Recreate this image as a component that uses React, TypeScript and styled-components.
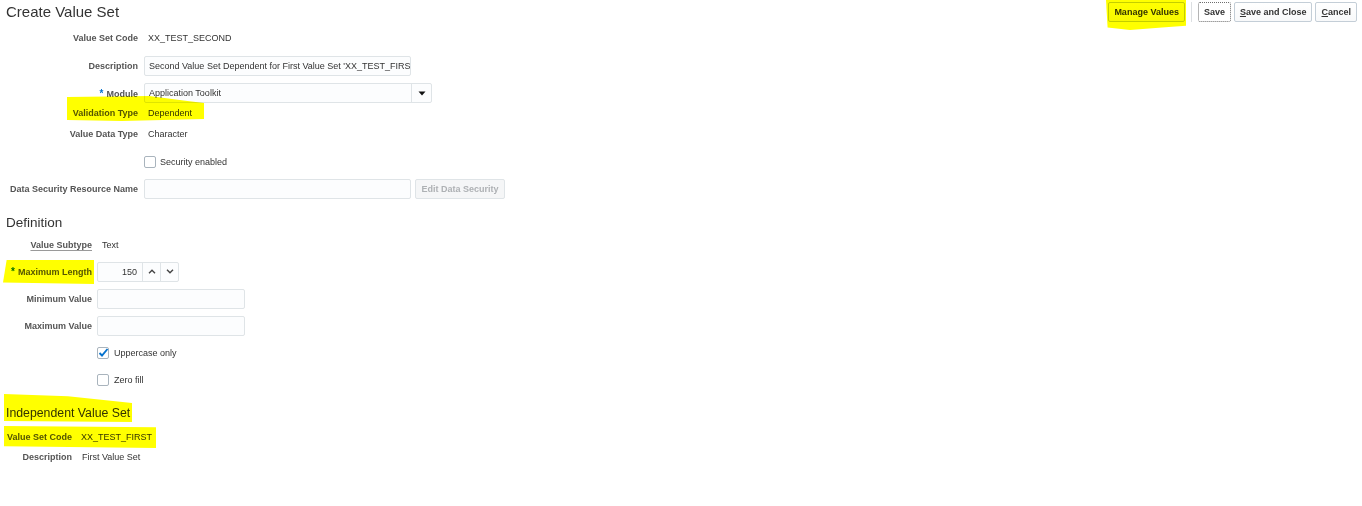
import React from "react";
import styled, { createGlobalStyle, css } from "styled-components";

const Global = createGlobalStyle`
  html, body { margin: 0; padding: 0; background: #ffffff; }
  body { font-family: "Liberation Sans", Arial, sans-serif; color: #333333; }
  * { box-sizing: border-box; }
`;

const Page = styled.div`
  position: relative;
  width: 1362px;
  min-height: 506px;
  padding-left: 6px;
  font-size: 9px;
`;

const Header = styled.div`
  display: flex;
  justify-content: space-between;
  align-items: flex-start;
  height: 25px;
  padding-right: 5px;
`;

const Title = styled.h1`
  margin: 0;
  font-size: 15px;
  line-height: 24px;
  font-weight: normal;
  color: #333333;
`;

const SectionTitle = styled.h2<{ $mt: number; $size: number }>`
  margin: ${(p) => p.$mt}px 0 0 0;
  height: 20px;
  font-size: ${(p) => p.$size}px;
  line-height: 20px;
  font-weight: normal;
  color: #333333;
`;

const Toolbar = styled.div`
  display: flex;
  align-items: center;
  gap: 3px;
  padding-top: 2px;
`;

const Button = styled.button<{ $focused?: boolean }>`
  height: 20px;
  padding: 0 5px;
  border: 1px solid #c4ced7;
  border-radius: 2px;
  background: linear-gradient(#ffffff, #f8f9fa);
  font-family: "Liberation Sans", Arial, sans-serif;
  font-size: 9px;
  font-weight: bold;
  color: #333333;
  cursor: pointer;
  ${(p) =>
    p.$focused &&
    css`
      border: 1px dotted #6d6d6d;
      background: #ffffff;
    `}
  u { text-decoration: underline; }
`;

const Separator = styled.div`
  width: 1px;
  height: 20px;
  background: #dcdfe2;
  margin: 0 3px;
`;

const Form = styled.div`
  display: flex;
  flex-direction: column;
`;

const Row = styled.div<{ $col: number; $gap: number; $h: number; $mt?: number }>`
  display: grid;
  grid-template-columns: ${(p) => p.$col}px auto;
  column-gap: ${(p) => p.$gap}px;
  align-items: center;
  justify-items: start;
  height: ${(p) => p.$h}px;
  margin-top: ${(p) => p.$mt ?? 0}px;
`;

const Label = styled.label<{ $underline?: boolean }>`
  justify-self: end;
  font-weight: bold;
  color: #555555;
  white-space: nowrap;
  ${(p) =>
    p.$underline &&
    css`
      text-decoration: underline;
      text-decoration-color: #9a9a9a;
      text-underline-offset: 2px;
    `}
`;

const Required = styled.span`
  color: #0572ce;
  font-size: 10px;
  margin-right: 3px;
`;

const Value = styled.span<{ $pad: number }>`
  padding-left: ${(p) => p.$pad}px;
  color: #333333;
  white-space: nowrap;
`;

const TextInput = styled.div<{ $w: number }>`
  width: ${(p) => p.$w}px;
  height: 20px;
  border: 1px solid #dfe4e7;
  border-radius: 2px;
  background: #fcfdfe;
  padding: 0 4px;
  display: flex;
  align-items: center;
  color: #333333;
  white-space: nowrap;
  overflow: hidden;
`;

const Controls = styled.div`
  display: flex;
  align-items: center;
  gap: 4px;
`;

const Select = styled.div`
  width: 288px;
  height: 20px;
  border: 1px solid #dfe4e7;
  border-radius: 2px;
  background: #fcfdfe;
  display: flex;
  align-items: stretch;
`;

const SelectText = styled.span`
  flex: 1;
  padding: 0 4px;
  display: flex;
  align-items: center;
  color: #333333;
`;

const SelectButton = styled.span`
  width: 20px;
  border-left: 1px solid #dfe4e7;
  display: flex;
  align-items: center;
  justify-content: center;
`;

const DisabledButton = styled.span`
  height: 20px;
  width: 90px;
  border: 1px solid #dfe4e7;
  border-radius: 2px;
  background: #f5f6f7;
  color: #aeb1b4;
  font-weight: bold;
  display: flex;
  align-items: center;
  justify-content: center;
`;

const Spin = styled.div`
  display: flex;
  height: 20px;
  border: 1px solid #dfe4e7;
  border-radius: 2px;
  background: #fcfdfe;
`;

const SpinValue = styled.span`
  width: 44px;
  padding-right: 5px;
  display: flex;
  align-items: center;
  justify-content: flex-end;
  color: #333333;
`;

const SpinButton = styled.span`
  width: 18px;
  border-left: 1px solid #dfe4e7;
  display: flex;
  align-items: center;
  justify-content: center;
`;

const Check = styled.label<{ $gap: number }>`
  display: flex;
  align-items: center;
  gap: ${(p) => p.$gap}px;
  color: #333333;
`;

const Box = styled.span`
  width: 12px;
  height: 12px;
  border: 1px solid #a9b4bd;
  border-radius: 2px;
  background: #ffffff;
  position: relative;
`;

const Tick = styled.svg`
  position: absolute;
  left: 0px;
  top: 0px;
`;

const Marker = styled.div<{ $x: number; $y: number; $w: number; $h: number; $clip: string }>`
  position: absolute;
  left: ${(p) => p.$x}px;
  top: ${(p) => p.$y}px;
  width: ${(p) => p.$w}px;
  height: ${(p) => p.$h}px;
  background: #ffff00;
  mix-blend-mode: multiply;
  pointer-events: none;
  clip-path: ${(p) => p.$clip};
`;

const Checkbox = ({ checked }: { checked?: boolean }) => (
  <Box>
    {checked && (
      <Tick width="11" height="10" viewBox="0 0 11 10">
        <polyline points="1.5,5 4,7.5 9.5,1" fill="none" stroke="#0572ce" strokeWidth="1.9" />
      </Tick>
    )}
  </Box>
);

const Chevron = ({ up }: { up?: boolean }) => (
  <svg width="8" height="5" viewBox="0 0 8 5">
    <polyline
      points={up ? "1,4.3 4,1.3 7,4.3" : "1,0.8 4,3.8 7,0.8"}
      fill="none"
      stroke="#444"
      strokeWidth="1.4"
    />
  </svg>
);

export default function App() {
  return (
    <>
      <Global />
      <Page>
        <Header>
          <Title>Create Value Set</Title>
          <Toolbar>
            <Button>Manage Values</Button>
            <Separator />
            <Button $focused>Save</Button>
            <Button>
              <u>S</u>ave and Close
            </Button>
            <Button>
              <u>C</u>ancel
            </Button>
          </Toolbar>
        </Header>

        <Form>
          <Row $col={132} $gap={6} $h={26}>
            <Label>Value Set Code</Label>
            <Value $pad={4}>XX_TEST_SECOND</Value>
          </Row>
          <Row $col={132} $gap={6} $h={30}>
            <Label>Description</Label>
            <TextInput $w={267}>Second Value Set Dependent for First Value Set 'XX_TEST_FIRST'</TextInput>
          </Row>
          <Row $col={132} $gap={6} $h={24}>
            <Label>
              <Required>*</Required>Module
            </Label>
            <Select>
              <SelectText>Application Toolkit</SelectText>
              <SelectButton>
                <svg width="8" height="5" viewBox="0 0 8 5">
                  <polygon points="0.5,0.5 7.5,0.5 4,4.5" fill="#111" />
                </svg>
              </SelectButton>
            </Select>
          </Row>
          <Row $col={132} $gap={6} $h={16}>
            <Label>Validation Type</Label>
            <Value $pad={4}>Dependent</Value>
          </Row>
          <Row $col={132} $gap={6} $h={26}>
            <Label>Value Data Type</Label>
            <Value $pad={4}>Character</Value>
          </Row>
          <Row $col={132} $gap={6} $h={30}>
            <span />
            <Check $gap={4}>
              <Checkbox />
              Security enabled
            </Check>
          </Row>
          <Row $col={132} $gap={6} $h={24}>
            <Label>Data Security Resource Name</Label>
            <Controls>
              <TextInput $w={267} />
              <DisabledButton>Edit Data Security</DisabledButton>
            </Controls>
          </Row>
        </Form>

        <SectionTitle $mt={12} $size={13.5}>Definition</SectionTitle>
        <Form>
          <Row $col={86} $gap={5} $h={24}>
            <Label $underline>Value Subtype</Label>
            <Value $pad={5}>Text</Value>
          </Row>
          <Row $col={86} $gap={5} $h={29}>
            <Label>
              <Required>*</Required>Maximum Length
            </Label>
            <Spin>
              <SpinValue>150</SpinValue>
              <SpinButton>
                <Chevron up />
              </SpinButton>
              <SpinButton>
                <Chevron />
              </SpinButton>
            </Spin>
          </Row>
          <Row $col={86} $gap={5} $h={25}>
            <Label>Minimum Value</Label>
            <TextInput $w={148} />
          </Row>
          <Row $col={86} $gap={5} $h={30}>
            <Label>Maximum Value</Label>
            <TextInput $w={148} />
          </Row>
          <Row $col={86} $gap={5} $h={24}>
            <span />
            <Check $gap={5}>
              <Checkbox checked />
              Uppercase only
            </Check>
          </Row>
          <Row $col={86} $gap={5} $h={30}>
            <span />
            <Check $gap={5}>
              <Checkbox />
              Zero fill
            </Check>
          </Row>
        </Form>

        <SectionTitle $mt={8} $size={12.3}>Independent Value Set</SectionTitle>
        <Form>
          <Row $col={66} $gap={9} $h={20} $mt={4}>
            <Label>Value Set Code</Label>
            <Value $pad={0}>XX_TEST_FIRST</Value>
          </Row>
          <Row $col={66} $gap={9} $h={20}>
            <Label>Description</Label>
            <Value $pad={1}>First Value Set</Value>
          </Row>
        </Form>

        <Marker $x={1106} $y={0} $w={80} $h={30} $clip="polygon(0 0, 100% 0, 100% 86%, 70% 92%, 30% 100%, 2% 92%)" />
        <Marker $x={67} $y={96} $w={137} $h={25} $clip="polygon(0 4%, 60% 0, 85% 18%, 100% 28%, 100% 92%, 40% 100%, 0 96%)" />
        <Marker $x={3} $y={260} $w={91} $h={24} $clip="polygon(4% 0, 100% 0, 100% 100%, 0 94%)" />
        <Marker $x={4} $y={394} $w={128} $h={28} $clip="polygon(0 0, 50% 8%, 100% 32%, 100% 100%, 0 96%)" />
        <Marker $x={4} $y={426} $w={152} $h={22} $clip="polygon(0 0, 100% 6%, 100% 100%, 0 92%)" />
      </Page>
    </>
  );
}
